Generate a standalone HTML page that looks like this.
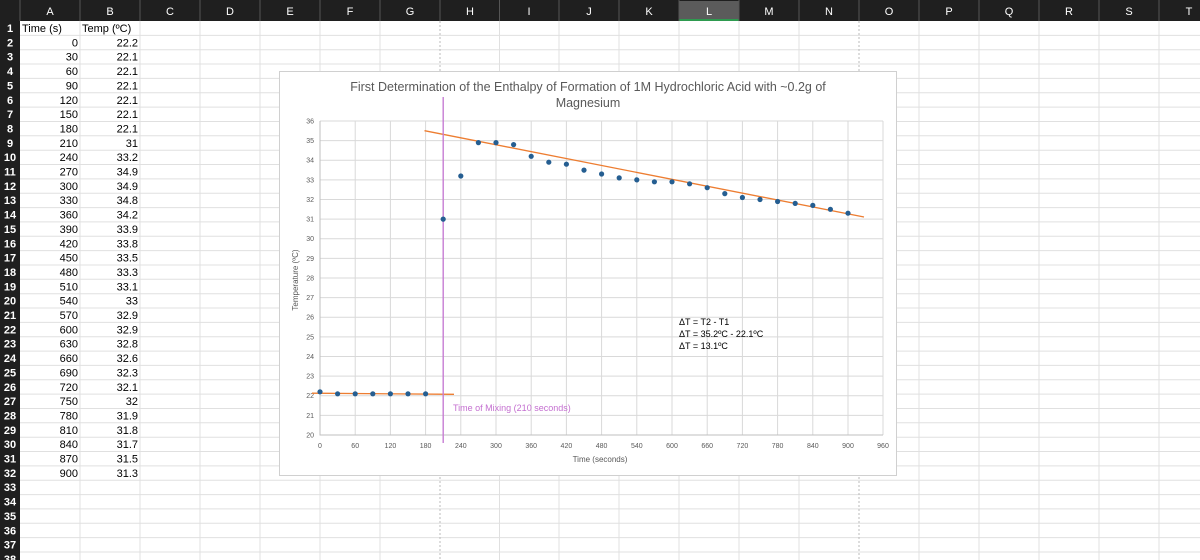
<!DOCTYPE html>
<html><head><meta charset="utf-8"><style>
html,body{margin:0;padding:0;width:1200px;height:560px;overflow:hidden;background:#fff}
svg{display:block}
text{font-family:"Liberation Sans",sans-serif}
</style></head><body>
<svg width="1200" height="560" viewBox="0 0 1200 560" xmlns="http://www.w3.org/2000/svg">
<!-- sheet grid -->
<g stroke="#e0e0e0" stroke-width="1">
<path d="M80 21V560M140 21V560M200 21V560M260 21V560M320 21V560M380 21V560M499.5 21V560M559 21V560M619 21V560M679 21V560M739 21V560M799 21V560M919 21V560M979 21V560M1039 21V560M1099 21V560M1159 21V560"/>
<path d="M20 35.4H1200M20 49.7H1200M20 64H1200M20 78.4H1200M20 92.8H1200M20 107.1H1200M20 121.5H1200M20 135.8H1200M20 150.2H1200M20 164.5H1200M20 178.9H1200M20 193.2H1200M20 207.6H1200M20 221.9H1200M20 236.3H1200M20 250.6H1200M20 265H1200M20 279.3H1200M20 293.7H1200M20 308H1200M20 322.4H1200M20 336.7H1200M20 351.1H1200M20 365.4H1200M20 379.8H1200M20 394.1H1200M20 408.5H1200M20 422.8H1200M20 437.2H1200M20 451.5H1200M20 465.9H1200M20 480.2H1200M20 494.6H1200M20 508.9H1200M20 523.3H1200M20 537.6H1200M20 552H1200"/>
</g>
<path d="M440 21V560M859 21V560" stroke="#bbb" stroke-dasharray="2,2"/>
<!-- headers -->
<rect x="0" y="0" width="1200" height="21" fill="#1f1f1f"/>
<rect x="0" y="0" width="20" height="560" fill="#1f1f1f"/>
<rect x="679" y="1" width="60" height="19" fill="#5b5b5b"/>
<rect x="679" y="19" width="60" height="2" fill="#2e9a4f"/>
<g stroke="#555"><path d="M20 0V21M80 0V21M140 0V21M200 0V21M260 0V21M320 0V21M380 0V21M440 0V21M499.5 0V21M559 0V21M619 0V21M679 0V21M739 0V21M799 0V21M859 0V21M919 0V21M979 0V21M1039 0V21M1099 0V21M1159 0V21"/></g>
<g fill="#fff" font-size="11" text-anchor="middle">
<text x="50" y="15">A</text><text x="110" y="15">B</text><text x="170" y="15">C</text><text x="230" y="15">D</text><text x="290" y="15">E</text><text x="350" y="15">F</text><text x="410" y="15">G</text><text x="470" y="15">H</text><text x="529" y="15">I</text><text x="589" y="15">J</text><text x="649" y="15">K</text><text x="709" y="15">L</text><text x="769" y="15">M</text><text x="829" y="15">N</text><text x="889" y="15">O</text><text x="949" y="15">P</text><text x="1009" y="15">Q</text><text x="1069" y="15">R</text><text x="1129" y="15">S</text><text x="1189" y="15">T</text>
</g>
<g fill="#fff" font-size="11" text-anchor="middle" font-weight="bold">
<text x="10" y="32">1</text><text x="10" y="46.4">2</text><text x="10" y="60.7">3</text><text x="10" y="75.1">4</text><text x="10" y="89.4">5</text><text x="10" y="103.8">6</text><text x="10" y="118.1">7</text><text x="10" y="132.5">8</text><text x="10" y="146.8">9</text><text x="10" y="161.2">10</text><text x="10" y="175.5">11</text><text x="10" y="189.9">12</text><text x="10" y="204.2">13</text><text x="10" y="218.6">14</text><text x="10" y="232.9">15</text><text x="10" y="247.3">16</text><text x="10" y="261.6">17</text><text x="10" y="276">18</text><text x="10" y="290.3">19</text><text x="10" y="304.7">20</text><text x="10" y="319">21</text><text x="10" y="333.4">22</text><text x="10" y="347.7">23</text><text x="10" y="362.1">24</text><text x="10" y="376.4">25</text><text x="10" y="390.8">26</text><text x="10" y="405.1">27</text><text x="10" y="419.5">28</text><text x="10" y="433.8">29</text><text x="10" y="448.2">30</text><text x="10" y="462.5">31</text><text x="10" y="476.9">32</text><text x="10" y="491.2">33</text><text x="10" y="505.6">34</text><text x="10" y="519.9">35</text><text x="10" y="534.3">36</text><text x="10" y="548.6">37</text><text x="10" y="563">38</text>
</g>
<!-- cell data -->
<g fill="#000" font-size="11">
<text x="22" y="32">Time (s)</text><text x="82" y="32">Temp (ºC)</text>
</g>
<g fill="#000" font-size="11" text-anchor="end">
<text x="78" y="46.4">0</text><text x="138" y="46.4">22.2</text>
<text x="78" y="60.7">30</text><text x="138" y="60.7">22.1</text>
<text x="78" y="75.1">60</text><text x="138" y="75.1">22.1</text>
<text x="78" y="89.4">90</text><text x="138" y="89.4">22.1</text>
<text x="78" y="103.8">120</text><text x="138" y="103.8">22.1</text>
<text x="78" y="118.1">150</text><text x="138" y="118.1">22.1</text>
<text x="78" y="132.5">180</text><text x="138" y="132.5">22.1</text>
<text x="78" y="146.8">210</text><text x="138" y="146.8">31</text>
<text x="78" y="161.2">240</text><text x="138" y="161.2">33.2</text>
<text x="78" y="175.5">270</text><text x="138" y="175.5">34.9</text>
<text x="78" y="189.9">300</text><text x="138" y="189.9">34.9</text>
<text x="78" y="204.2">330</text><text x="138" y="204.2">34.8</text>
<text x="78" y="218.6">360</text><text x="138" y="218.6">34.2</text>
<text x="78" y="232.9">390</text><text x="138" y="232.9">33.9</text>
<text x="78" y="247.3">420</text><text x="138" y="247.3">33.8</text>
<text x="78" y="261.6">450</text><text x="138" y="261.6">33.5</text>
<text x="78" y="276">480</text><text x="138" y="276">33.3</text>
<text x="78" y="290.3">510</text><text x="138" y="290.3">33.1</text>
<text x="78" y="304.7">540</text><text x="138" y="304.7">33</text>
<text x="78" y="319">570</text><text x="138" y="319">32.9</text>
<text x="78" y="333.4">600</text><text x="138" y="333.4">32.9</text>
<text x="78" y="347.7">630</text><text x="138" y="347.7">32.8</text>
<text x="78" y="362.1">660</text><text x="138" y="362.1">32.6</text>
<text x="78" y="376.4">690</text><text x="138" y="376.4">32.3</text>
<text x="78" y="390.8">720</text><text x="138" y="390.8">32.1</text>
<text x="78" y="405.1">750</text><text x="138" y="405.1">32</text>
<text x="78" y="419.5">780</text><text x="138" y="419.5">31.9</text>
<text x="78" y="433.8">810</text><text x="138" y="433.8">31.8</text>
<text x="78" y="448.2">840</text><text x="138" y="448.2">31.7</text>
<text x="78" y="462.5">870</text><text x="138" y="462.5">31.5</text>
<text x="78" y="476.9">900</text><text x="138" y="476.9">31.3</text>
</g>
<!-- chart -->
<rect x="279.5" y="71.5" width="617" height="404" fill="#fff" stroke="#d0d0d0"/>
<g fill="#595959" font-size="12.5" text-anchor="middle">
<text x="588" y="91">First Determination of the Enthalpy of Formation of 1M Hydrochloric Acid with ~0.2g of</text>
<text x="588" y="107">Magnesium</text>
</g>
<g stroke="#d9d9d9" stroke-width="1">
<path d="M320 121H883M320 140.6H883M320 160.3H883M320 179.9H883M320 199.5H883M320 219.1H883M320 238.8H883M320 258.4H883M320 278H883M320 297.6H883M320 317.3H883M320 336.9H883M320 356.5H883M320 376.1H883M320 395.8H883M320 415.4H883"/>
<path d="M355.2 121V435M390.4 121V435M425.6 121V435M460.8 121V435M496 121V435M531.2 121V435M566.4 121V435M601.6 121V435M636.8 121V435M672 121V435M707.2 121V435M742.4 121V435M777.6 121V435M812.8 121V435M848 121V435M883 121V435"/>
</g>
<path d="M320 121V435H883" stroke="#bfbfbf" fill="none"/>
<g fill="#595959" font-size="7" text-anchor="end">
<text x="314" y="123.5">36</text><text x="314" y="143">35</text><text x="314" y="162.7">34</text><text x="314" y="182.3">33</text><text x="314" y="202">32</text><text x="314" y="221.6">31</text><text x="314" y="241.2">30</text><text x="314" y="260.8">29</text><text x="314" y="280.5">28</text><text x="314" y="300.1">27</text><text x="314" y="319.7">26</text><text x="314" y="339.3">25</text><text x="314" y="359">24</text><text x="314" y="378.6">23</text><text x="314" y="398.2">22</text><text x="314" y="417.8">21</text><text x="314" y="437.5">20</text>
</g>
<g fill="#595959" font-size="7" text-anchor="middle">
<text x="320" y="448">0</text><text x="355.2" y="448">60</text><text x="390.4" y="448">120</text><text x="425.6" y="448">180</text><text x="460.8" y="448">240</text><text x="496" y="448">300</text><text x="531.2" y="448">360</text><text x="566.4" y="448">420</text><text x="601.6" y="448">480</text><text x="636.8" y="448">540</text><text x="672" y="448">600</text><text x="707.2" y="448">660</text><text x="742.4" y="448">720</text><text x="777.6" y="448">780</text><text x="812.8" y="448">840</text><text x="848" y="448">900</text><text x="883" y="448">960</text>
<text x="600" y="462" font-size="8">Time (seconds)</text>
<text transform="translate(298,280) rotate(-90)" font-size="8">Temperature (ºC)</text>
</g>
<!-- trend lines -->
<path d="M424.5 130.7L864 217" stroke="#ed7d31" stroke-width="1.3"/>
<path d="M312 393.2L454 394.3" stroke="#ed7d31" stroke-width="1.3"/>
<!-- mixing line -->
<path d="M443.2 97V443" stroke="#c77dd3" stroke-width="1.4"/>
<text x="453" y="411" font-size="9" fill="#c46fd0">Time of Mixing (210 seconds)</text>
<!-- points -->
<g fill="#255e91">
<circle cx="320" cy="391.8" r="2.6"/><circle cx="337.6" cy="393.8" r="2.6"/><circle cx="355.2" cy="393.8" r="2.6"/><circle cx="372.8" cy="393.8" r="2.6"/><circle cx="390.4" cy="393.8" r="2.6"/><circle cx="408" cy="393.8" r="2.6"/><circle cx="425.6" cy="393.8" r="2.6"/>
<circle cx="443.2" cy="219.1" r="2.6"/><circle cx="460.8" cy="176" r="2.6"/><circle cx="478.4" cy="142.6" r="2.6"/><circle cx="496" cy="142.6" r="2.6"/><circle cx="513.6" cy="144.6" r="2.6"/><circle cx="531.2" cy="156.3" r="2.6"/><circle cx="548.8" cy="162.2" r="2.6"/><circle cx="566.4" cy="164.2" r="2.6"/><circle cx="584" cy="170.1" r="2.6"/><circle cx="601.6" cy="174" r="2.6"/><circle cx="619.2" cy="177.9" r="2.6"/><circle cx="636.8" cy="179.9" r="2.6"/><circle cx="654.4" cy="181.8" r="2.6"/><circle cx="672" cy="181.8" r="2.6"/><circle cx="689.6" cy="183.8" r="2.6"/><circle cx="707.2" cy="187.7" r="2.6"/><circle cx="724.8" cy="193.6" r="2.6"/><circle cx="742.4" cy="197.5" r="2.6"/><circle cx="760" cy="199.5" r="2.6"/><circle cx="777.6" cy="201.5" r="2.6"/><circle cx="795.2" cy="203.4" r="2.6"/><circle cx="812.8" cy="205.4" r="2.6"/><circle cx="830.4" cy="209.3" r="2.6"/><circle cx="848" cy="213.2" r="2.6"/>
</g>
<g fill="#000" font-size="9">
<text x="679" y="325">ΔT = T2 - T1</text>
<text x="679" y="337">ΔT = 35.2ºC - 22.1ºC</text>
<text x="679" y="349">ΔT = 13.1ºC</text>
</g>
</svg>
</body></html>
